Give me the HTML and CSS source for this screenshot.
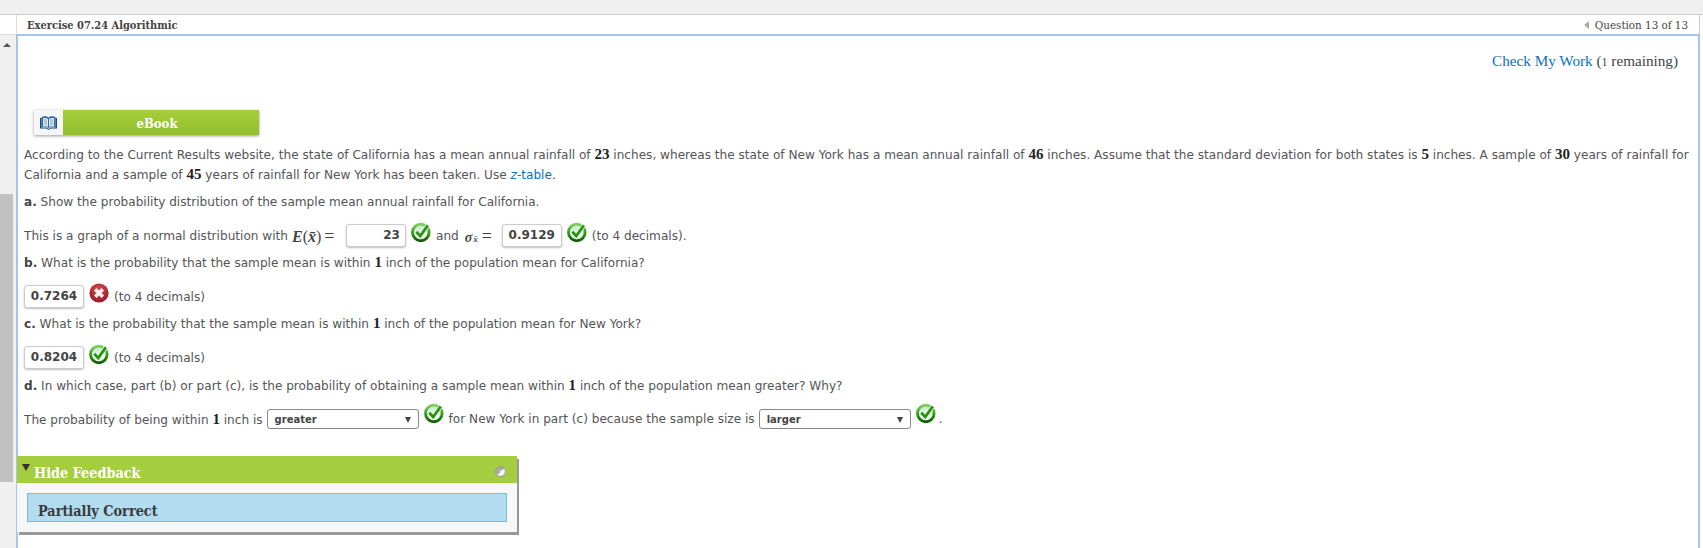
FILE: index.html
```html
<!DOCTYPE html>
<html lang="en">
<head>
<meta charset="utf-8">
<title>Exercise 07.24 Algorithmic</title>
<link rel="stylesheet" href="styles.css">
</head>
<body>
<div class="topband"></div>
<header class="titlebar">
  <div class="title">Exercise 07.24 Algorithmic</div>
  <div class="qnav"><span class="tri-left"></span>Question 13 of 13</div>
</header>
<div class="workspace">
  <aside class="scrollbar">
    <div class="sb-up"></div>
    <div class="sb-thumb"></div>
  </aside>
  <main class="content">
    <div class="check"><a class="link">Check My Work</a> (<span class="oldstyle">1</span> remaining)</div>
    <div class="ebook">
      <span class="ebook-icon">
        <svg viewBox="0 0 17 14" width="17" height="14"><path d="M0 2h1.500v9.500H7L8.500 13 10 11.500h5.500V2H17v10.500h-6.500L8.500 14l-2-1.500H0z" fill="#1a4a80"/><path d="M1.500 1C4 0 7 0 8.500 1.500 10 0 13 0 15.500 1v10H10l-1.500 1L7 11H1.500z" fill="#2c6aa6"/><path d="M3 2.200C5 1.800 7 2 8 3v7.500H3zM9 3c1-1 3-1.200 5-.800v8.300H9z" fill="#dfe9f2"/><path d="M4 4h3M4 6h3M4 8h3M10 4h3M10 6h3M10 8h3" stroke="#86a3bf" stroke-width="1"/></svg>
      </span>
      <span class="ebook-label">eBook</span>
    </div>
    <p class="para intro">According to the Current Results website, the state of California has a mean annual rainfall of <span class="m">23</span> inches, whereas the state of New York has a mean annual rainfall of <span class="m">46</span> inches. Assume that the standard deviation for both states is <span class="m">5</span> inches. A sample of <span class="m">30</span> years of rainfall for California and a sample of <span class="m">45</span> years of rainfall for New York has been taken. Use <a class="ztable"><i>z</i>-table</a>.</p>
    <p class="para gap-q"><b>a.</b> Show the probability distribution of the sample mean annual rainfall for California.</p>
    <div class="row gap-r">
      <span>This is a graph of a normal distribution with</span>
      <span class="math math-e"><i>E</i><span class="paren">(</span><i>x̄</i><span class="paren">)</span><span class="eq">=</span></span>
      <span class="box">23</span>
      <svg class="mark" viewBox="0 0 20 20"><use href="#okmark"/></svg>
      <span class="after-mark">and</span>
      <span class="math math-s"><i>σ</i><sub><i>x̄</i></sub><span class="eq">=</span></span>
      <span class="box center">0.9129</span>
      <svg class="mark" viewBox="0 0 20 20"><use href="#okmark"/></svg>
      <span class="after-mark">(to 4 decimals).</span>
    </div>
    <p class="para gap-s"><b>b.</b> What is the probability that the sample mean is within <span class="m">1</span> inch of the population mean for California?</p>
    <div class="row gap-r">
      <span class="box center">0.7264</span>
      <svg class="mark" viewBox="0 0 20 20"><use href="#badmark"/></svg>
      <span class="after-mark">(to 4 decimals)</span>
    </div>
    <p class="para gap-s"><b>c.</b> What is the probability that the sample mean is within <span class="m">1</span> inch of the population mean for New York?</p>
    <div class="row gap-r">
      <span class="box center">0.8204</span>
      <svg class="mark" viewBox="0 0 20 20"><use href="#okmark"/></svg>
      <span class="after-mark">(to 4 decimals)</span>
    </div>
    <p class="para gap-q"><b>d.</b> In which case, part (b) or part (c), is the probability of obtaining a sample mean within <span class="m">1</span> inch of the population mean greater? Why?</p>
    <div class="row row-sel">
      <span>The probability of being within <span class="m">1</span> inch is</span>
      <span class="select">greater<span class="caret"></span></span>
      <svg class="mark" viewBox="0 0 20 20"><use href="#okmark"/></svg>
      <span class="after-mark">for New York in part (c) because the sample size is</span>
      <span class="select">larger<span class="caret"></span></span>
      <svg class="mark" viewBox="0 0 20 20"><use href="#okmark"/></svg>
      <span class="dot-end">.</span>
    </div>
    <section class="feedback">
      <div class="fb-head"><span class="tri-down"></span><span class="fb-title">Hide Feedback</span><span class="fb-dot"></span></div>
      <div class="fb-body"><div class="fb-msg">Partially Correct</div></div>
    </section>
  </main>
</div>
<svg class="defs" width="0" height="0">
  <defs>
    <linearGradient id="ring" x1="0" y1="0" x2="0" y2="1"><stop offset="0" stop-color="#7fd05a"/><stop offset=".55" stop-color="#2f9a14"/><stop offset="1" stop-color="#0f5f04"/></linearGradient>
    <linearGradient id="fillok" x1="0" y1="0" x2="0" y2="1"><stop offset="0" stop-color="#bfe8cc"/><stop offset="1" stop-color="#ffffff"/></linearGradient>
    <radialGradient id="redball" cx=".5" cy=".35" r=".7"><stop offset="0" stop-color="#e2505a"/><stop offset="1" stop-color="#8c141c"/></radialGradient>
    <g id="okmark"><circle cx="9.800" cy="10.400" r="8.300" fill="url(#fillok)" stroke="url(#ring)" stroke-width="2.800"/><path d="M5.300 9.800l3.900 4.200L16.800 3.400" fill="none" stroke="#fff" stroke-width="4.400"/><path d="M5.300 9.800l3.900 4.200L16.800 3.400" fill="none" stroke="#2a960f" stroke-width="3"/></g>
    <g id="badmark"><circle cx="10" cy="10" r="9.600" fill="url(#redball)"/><path d="M6.200 6.200l7.600 7.600M13.800 6.200l-7.600 7.600" fill="none" stroke="#f4f0f0" stroke-width="3.600"/></g>
  </defs>
</svg>
</body>
</html>
```
FILE: styles.css
```css
* { box-sizing: border-box; }
html, body { margin: 0; height: 548px; overflow: hidden; background: #fff; }
body { font-family: "DejaVu Sans", sans-serif; font-size: 12.1px; color: #555; }
.topband { height: 15px; background: #f0f0f0; border-bottom: 1px solid #ccc; }
.titlebar { height: 19px; width: 1684px; margin-left: 16px; display: flex; justify-content: space-between; align-items: center; padding: 1px 11px 0 10px; font-family: "DejaVu Serif", serif; font-stretch: condensed; color: #444; border-left: 1px solid #ddd; border-right: 1px solid #ccc; }
.title { font-weight: bold; font-size: 11px; }
.qnav { font-size: 11.500px; display: flex; align-items: center; gap: 6px; }
.tri-left { width: 0; height: 0; border: 4px solid transparent; border-right: 5px solid #aaa; border-left: 0; }
.workspace { display: flex; height: 514px; }
.scrollbar { width: 16px; background: #f0f0f0; border-top: 1px solid #ddd; padding-top: 8px; }
.sb-up { width: 0; height: 0; margin-left: 3px; border: 4px solid transparent; border-top: 0; border-bottom: 4px solid #555; }
.sb-thumb { height: 288px; margin-top: 147px; width: 13px; background: #c1c1c1; }
.content { flex: 0 0 1684px; border: solid #a8c4ee; border-width: 2px 2px 0; padding: 0 6px; }
.check { height: 74px; padding: 15px 14px 0 0; text-align: right; font-family: "Liberation Serif", serif; font-size: 15.200px; line-height: 20px; color: #444; }
.link { color: #0a70c0; }
.oldstyle { font-size: 12px; }
.ebook { display: flex; width: 225px; height: 25px; margin-left: 10px; box-shadow: 0 1px 3px rgba(0,0,0,.4); }
.ebook-icon { width: 29px; background: #f6f6f6; display: flex; align-items: center; justify-content: center; }
.ebook-label { flex: 1; padding: 1px 8px 0 0; background: linear-gradient(#a5d03c, #93bd2a); color: #fff; font: bold 13px/25px "DejaVu Serif", serif; font-stretch: condensed; text-align: center; }
.para { margin: 0; line-height: 20px; }
.para b { color: #444; }
.intro { margin-top: 10px; }
.gap-q { margin-top: 7px; }
.gap-s { margin-top: 6px; }
.gap-r { margin-top: 12px; }
.m { font-family: "Liberation Serif", serif; font-size: 15px; line-height: 1; font-weight: bold; color: #222; }
.row { display: flex; align-items: center; height: 23px; white-space: nowrap; }
.row-sel { height: 20px; margin-top: 13px; }
.math { display: flex; align-items: baseline; font-family: "Liberation Serif", serif; font-size: 16px; line-height: 1; font-weight: bold; color: #444; }
.math-e { width: 52px; margin-left: 4px; }
.math-s { width: 35px; margin-left: 6px; font-size: 14px; }
.math sub { font-size: 9px; line-height: 0; margin: 0 1px; }
.paren { font-weight: normal; }
.eq { font-size: 18px; font-weight: normal; margin-left: 3px; line-height: 1; }
.box { width: 60px; height: 23px; margin-left: 2px; border: 1px solid #ccc; border-radius: 3px; box-shadow: 0 1px 2px rgba(0,0,0,.25); background: #fff; font-weight: bold; font-size: 12px; line-height: 21px; color: #444; padding: 0 5px; text-align: right; }
.row > .box:first-child { margin-left: 0; }
.center { text-align: center; padding: 0; }
.mark { flex: none; width: 20px; height: 20px; margin: -8px 0 0 5px; }
.row-sel .mark { margin-top: -12px; margin-left: 5px; }
.after-mark { margin-left: 5px; }
.dot-end { margin-left: 3px; }
.select { display: flex; align-items: center; justify-content: space-between; width: 152px; height: 20px; margin-left: 4px; border: 1px solid #888; border-radius: 3px; padding: 1px 7px 0; font-weight: bold; font-size: 10px; color: #444; background: #fff; }
.caret { width: 0; height: 0; border: 3px solid transparent; border-top: 6px solid #444; border-bottom: 0; }
.ztable { color: #0a70c0; }
.feedback { width: 500px; margin: 27px 0 0 -7px; box-shadow: 2px 3px 0 #999; }
.fb-head { height: 27px; background: #a4ce3f; display: flex; align-items: flex-start; padding: 0 11px 0 5px; color: #fff; }
.tri-down { width: 0; height: 0; margin: 8px 4px 0 0; border: 4px solid transparent; border-top: 7px solid #333; border-bottom: 0; }
.fb-title { flex: 1; font: bold 14.300px/20px "DejaVu Serif", serif; font-stretch: condensed; padding-top: 7px; }
.fb-dot { width: 11px; height: 11px; margin-top: 10px; border-radius: 50%; background: linear-gradient(135deg, #aaa 50%, #f2f2f2 50%); border: 1px solid #999; }
.fb-body { height: 49px; background: #f7f7f7; padding: 10px; }
.fb-msg { height: 29px; background: #b2dcef; border: 1px solid #7dbadd; padding: 7px 10px 0; font: bold 14.300px/20px "DejaVu Serif", serif; font-stretch: condensed; color: #3a3a3a; }
.defs { position: absolute; }
```
